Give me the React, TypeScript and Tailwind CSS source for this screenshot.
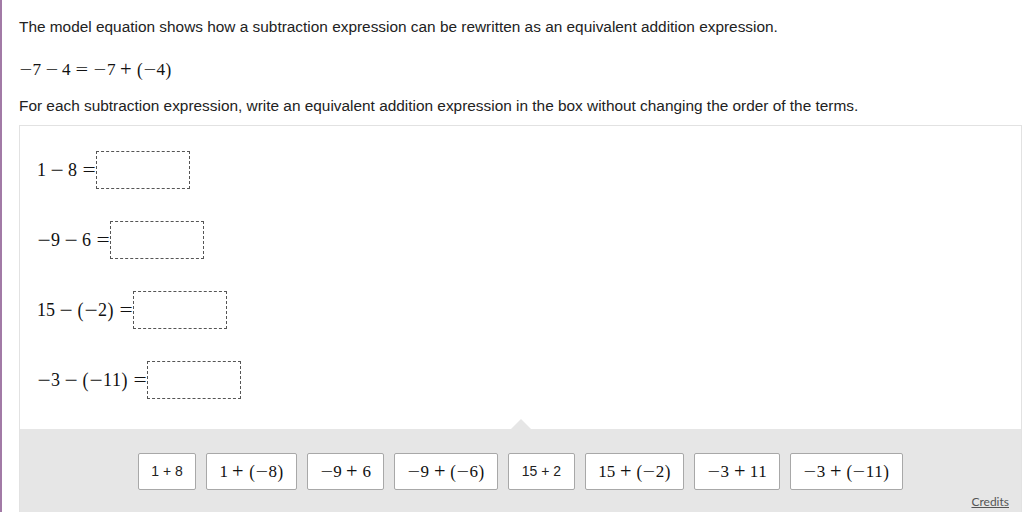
const problems = ["1−8=", "−9−6=", "15−(−2)=", "−3−(−11)="];

const tiles = [
  { label: "1 + 8", math: false, w: "w-[58px]" },
  { label: "1+(−8)", math: true, w: "w-[91px]" },
  { label: "−9+6", math: true, w: "w-[77px]" },
  { label: "−9+(−6)", math: true, w: "w-[104px]" },
  { label: "15 + 2", math: false, w: "w-[67px]" },
  { label: "15+(−2)", math: true, w: "w-[99px]" },
  { label: "−3+11", math: true, w: "w-[86px]" },
  { label: "−3+(−11)", math: true, w: "w-[113px]" },
];

const mathFont = "font-['Liberation_Serif',serif]";
const sans = "font-['Liberation_Sans',Arial,sans-serif]";

// rough TeX-style spacing: operators get a wide box, binary ops get side space
const Math = ({ tex, trailing = true }: { tex: string; trailing?: boolean }) => {
  const chars = tex.split("");
  return (
    <span className={`${mathFont} inline-flex items-baseline whitespace-pre`}>
      {chars.map((c, i) => {
        const prev = chars[i - 1];
        if (c === "=") {
          const last = i === chars.length - 1;
          return (
            <span key={i} className={`inline-block w-[0.778em] text-center ml-[0.278em] ${last && !trailing ? "" : "mr-[0.278em]"}`}>
              <span className="inline-block scale-x-[1.3]">=</span>
            </span>
          );
        }
        if (c === "−" || c === "+") {
          const unary = prev === undefined || prev === "(" || prev === "=" || prev === "+" || prev === "−";
          return (
            <span key={i} className={`inline-block w-[0.778em] text-center ${unary ? "" : "mx-[0.222em]"}`}>
              <span className={`inline-block ${c === "−" ? "scale-x-[1.3]" : "scale-[1.2]"}`}>{c}</span>
            </span>
          );
        }
        if (c === "(" || c === ")") {
          return (
            <span key={i} className="inline-block w-[0.389em] text-center">
              <span className="inline-block scale-y-[1.12]">{c}</span>
            </span>
          );
        }
        return <span key={i}>{c}</span>;
      })}
    </span>
  );
};

const App = () => {
  return (
    <div className="relative w-[1024px] h-[512px] overflow-hidden bg-white border-l-2 border-[#a27aa6]">
      <div className="pl-[17px] pr-[2px]">
        <p className={`${sans} text-[15.4px] leading-[18px] text-[#222] pt-[18px] whitespace-nowrap`}>
          The model equation shows how a subtraction expression can be rewritten as an equivalent addition expression.
        </p>
        <p className="text-[17.2px] leading-[20px] text-[#111] mt-[23px]">
          <Math tex="−7−4=−7+(−4)" />
        </p>
        <p className={`${sans} text-[15.4px] leading-[18px] text-[#222] mt-[17px] whitespace-nowrap`}>
          For each subtraction expression, write an equivalent addition expression in the box without changing the order of the terms.
        </p>

        {/* Panel */}
        <div className="mt-[10px] w-[1003px] h-[388px] border border-[#e2e2e2] border-b-0 flex flex-col">
          <div className="flex flex-col gap-[32px] pt-[25px] pl-[17px]">
            {problems.map((p) => (
              <div key={p} className="flex items-center">
                <span className="text-[18px] text-[#111]">
                  <Math tex={p} trailing={false} />
                </span>
                <div className="w-[94px] h-[38px] border border-dashed border-[#555]" />
              </div>
            ))}
          </div>

          {/* Tray */}
          <div className="relative mt-auto h-[84px] bg-[#e6e6e6]">
            <div className="absolute left-[491px] -top-[10px] w-0 h-0 border-l-[10px] border-r-[10px] border-b-[10px] border-l-transparent border-r-transparent border-b-[#e6e6e6]" />
            <div className="flex justify-center gap-[10px] pt-[24px]">
              {tiles.map((t) => (
                <div
                  key={t.label}
                  className={`${t.w} h-[37px] flex items-center justify-center bg-white border border-[#a8a8a8] rounded-[2px] ${
                    t.math ? "text-[17px] text-[#111]" : `${sans} text-[14px] text-[#222]`
                  } whitespace-pre`}
                >
                  {t.math ? <Math tex={t.label} /> : t.label}
                </div>
              ))}
            </div>
            <span className="absolute right-[12px] bottom-[3px] font-['Lato',sans-serif] text-[12px] leading-[16px] text-[#555] underline">
              Credits
            </span>
          </div>
        </div>
      </div>
    </div>
  );
};

export default App;
